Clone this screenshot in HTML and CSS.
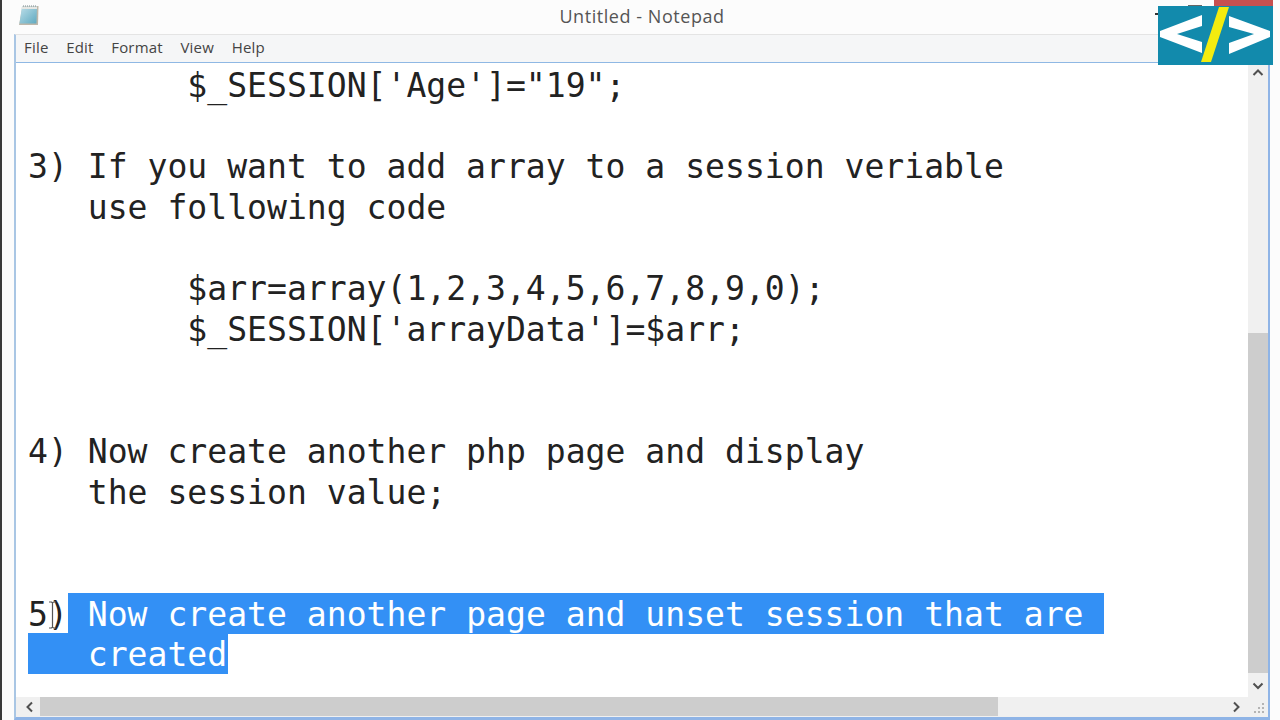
FILE: index.html
```html
<!DOCTYPE html>
<html lang="en">
<head>
<meta charset="utf-8">
<title>Untitled - Notepad</title>
<link rel="stylesheet" href="styles.css">
</head>
<body>
<div class="window">
  <header class="titlebar">
    <svg class="app-icon" width="22" height="22" viewBox="0 0 22 22">
      <defs><linearGradient id="pad" x1="0" y1="0" x2="1" y2="1"><stop offset="0" stop-color="#bfe0ea"/><stop offset="1" stop-color="#5fa9c0"/></linearGradient></defs>
      <path d="M4.500 1h16l-.5 19H1z" fill="#bdb7aa"/>
      <path d="M4 1.500h15l-.6 17H1.500z" fill="url(#pad)"/>
      <path d="M4 1.500h15v2.500H3.500z" fill="#e6e7e4"/>
      <path d="M5 1h13" stroke="#7f8a8e" stroke-width="1.200" stroke-dasharray="1 1"/>
    </svg>
    <div class="title">Untitled - Notepad</div>
    <div class="controls">
      <span class="min"></span>
      <span class="max"></span>
      <span class="close"></span>
    </div>
  </header>
  <div class="frame">
    <nav class="menu">
      <span>File</span><span>Edit</span><span>Format</span><span>View</span><span>Help</span>
    </nav>
    <div class="client">
      <div class="top-row">
        <pre class="editor">        $_SESSION['Age']="19";

3) If you want to add array to a session veriable
   use following code

        $arr=array(1,2,3,4,5,6,7,8,9,0);
        $_SESSION['arrayData']=$arr;


4) Now create another php page and display
   the session value;


<span class="caret-wrap">5)<svg class="ibeam" width="9" height="28" viewBox="0 0 9 28"><path d="M1 1h2.500l1 1 1-1H8M4.500 2v24M1 27h2.500l1-1 1 1H8" fill="none" stroke="#555" stroke-width="1.200"/></svg></span><span class="sel"> Now create another page and unset session that are 
   created</span></pre>
        <div class="vscroll">
          <svg class="arrow" width="20" height="20" viewBox="0 0 20 20"><path d="M5.500 12l4.500-4.500 4.500 4.500" fill="none" stroke="#505050" stroke-width="2"/></svg>
          <div class="vtrack"><div class="vthumb"></div></div>
          <svg class="arrow" width="20" height="20" viewBox="0 0 20 20"><path d="M5.500 6.500l4.500 4.500 4.500-4.500" fill="none" stroke="#505050" stroke-width="2"/></svg>
        </div>
      </div>
      <div class="hscroll">
        <svg class="arrow" width="24" height="20" viewBox="0 0 24 20"><path d="M16 5.500l-4.500 4.500 4.500 4.500" fill="none" stroke="#505050" stroke-width="2"/></svg>
        <div class="htrack"><div class="hthumb"></div></div>
        <svg class="arrow" width="20" height="20" viewBox="0 0 20 20"><path d="M6 5.500l4.500 4.500-4.500 4.500" fill="none" stroke="#505050" stroke-width="2"/></svg>
        <svg class="grip" width="20" height="20" viewBox="0 0 20 20"><path d="M14 6h2v2h-2zM10 10h2v2h-2zM14 10h2v2h-2zM6 14h2v2H6zM10 14h2v2h-2zM14 14h2v2h-2z" fill="#b4b4b4"/></svg>
      </div>
    </div>
  </div>
</div>
<div class="logo">
  <svg width="115" height="59" viewBox="0 0 115 59">
    <path d="M44 9v11L19 28l25 8v11L2 31v-6z" fill="#fff"/>
    <path d="M71 1H61L43 56h10z" fill="#f3ec0f"/>
    <path d="M71 10v11l25 7-25 9v11l41-17v-6z" fill="#fff"/>
  </svg>
</div>
</body>
</html>
```
FILE: styles.css
```css
* { box-sizing: border-box; }
html, body { margin: 0; padding: 0; }
body {
  width: 1280px;
  height: 720px;
  overflow: hidden;
  background: #fdfaf8;
  font-family: "Open Sans", "Noto Sans", sans-serif;
  position: relative;
}
.window {
  width: 1280px;
  height: 720px;
  display: flex;
  flex-direction: column;
  background: #fcfcfc;
  border-left: 2px solid #3a3a3a;
}
.titlebar {
  height: 34px;
  flex: none;
  display: flex;
  align-items: flex-start;
  position: relative;
  padding: 5px 0 0 16px;
}
.app-icon { flex: none; }
.title {
  position: absolute;
  left: 0;
  right: 0;
  top: 3px;
  padding-left: 2px;
  text-align: center;
  font-size: 18px;
  letter-spacing: 0.55px;
  line-height: 26px;
  color: #555;
}
.controls {
  margin-left: auto;
  margin-right: 7px;
  display: flex;
  align-items: flex-start;
}
.min { width: 5px; height: 2px; background: #333; margin: 8px 28px 0 0; }
.max { width: 14px; height: 2px; margin-top: 0; background: #666; margin-right: 12px; }
.close { width: 59px; height: 7px; background: #c75050; margin-top: -5px; }
.frame {
  flex: 1;
  min-height: 0;
  margin: 0 10px 0 12px;
  display: flex;
  flex-direction: column;
  border-left: 2px solid #a9c6e4;
  border-right: 2px solid #8fb4e6;
  border-bottom: 3px solid #8fb4e6;
  border-top: 1px solid #e4e4e4;
}
.menu {
  height: 28px;
  flex: none;
  display: flex;
  align-items: center;
  gap: 17.6px;
  padding: 0 0 3px 8px;
  font-size: 15px;
  letter-spacing: 0.2px;
  color: #444;
  background: #f5f6f7;
  border-bottom: 1px solid #8fb8e4;
}
.client {
  flex: 1;
  min-height: 0;
  display: flex;
  flex-direction: column;
  background: #fff;
}
.top-row {
  flex: 1;
  min-height: 0;
  display: flex;
}
.editor {
  flex: 1;
  min-width: 0;
  margin: 0;
  padding: 3px 0 0 12px;
  overflow: hidden;
  font-family: "DejaVu Sans Mono", "Liberation Mono", monospace;
  font-size: 33.1px;
  line-height: 40.67px;
  color: #222;
  background: #fff;
  white-space: pre;
}
.sel {
  background: #3390f5;
  color: #fff;
  padding: 2px 1px 0 0;
  -webkit-box-decoration-break: clone;
  box-decoration-break: clone;
}
.caret-wrap { position: relative; }
.ibeam { position: absolute; left: 20px; top: 6px; }
.vscroll {
  width: 20px;
  flex: none;
  display: flex;
  flex-direction: column;
  background: #f0f0f0;
}
.arrow { flex: none; display: block; }
.vtrack {
  flex: 1;
  min-height: 0;
  display: flex;
  flex-direction: column;
  justify-content: flex-end;
  padding-bottom: 4px;
}
.vthumb { height: 340px; background: #cdcdcd; }
.hscroll {
  height: 20px;
  flex: none;
  display: flex;
  background: #f0f0f0;
}
.htrack { flex: 1; min-width: 0; }
.hthumb { width: 958px; height: 19px; background: #cdcdcd; }
.grip { flex: none; display: block; }
.logo {
  position: absolute;
  left: 1158px;
  top: 6px;
  width: 115px;
  height: 59px;
  background: #128aac;
  overflow: hidden;
}
```
